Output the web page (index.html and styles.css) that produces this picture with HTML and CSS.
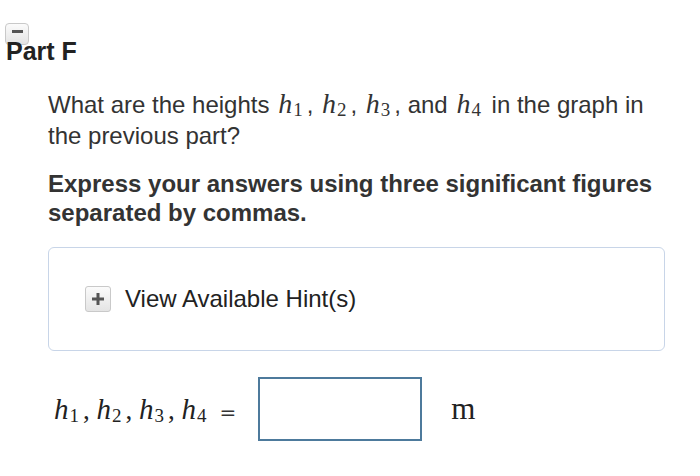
FILE: index.html
```html
<!DOCTYPE html>
<html>
<head>
<meta charset="utf-8">
<link rel="stylesheet" href="styles.css">
</head>
<body>
<div class="page">
  <div class="part-head">
    <span class="toggle minus"><span class="bar"></span></span>
    <h2 class="part-title">Part F</h2>
  </div>
  <div class="content">
    <p class="question">What are the heights <span class="m"><i>h</i><sub>1</sub></span>, <span class="m"><i>h</i><sub>2</sub></span>, <span class="m"><i>h</i><sub>3</sub></span>, and <span class="m"><i>h</i><sub>4</sub></span> in the graph in the previous part?</p>
    <p class="instr">Express your answers using three significant figures separated by commas.</p>
    <div class="hint-box">
      <span class="toggle plus"><svg width="12" height="12" viewBox="0 0 12 12"><rect x="4.5" y="0" width="3" height="12" fill="#555"/><rect x="0" y="4.5" width="12" height="3" fill="#555"/></svg></span>
      <span class="hint-text">View Available Hint(s)</span>
    </div>
    <div class="answer-row">
      <span class="eq"><span class="em"><i>h</i><sub>1</sub></span>, <span class="em"><i>h</i><sub>2</sub></span>, <span class="em"><i>h</i><sub>3</sub></span>, <span class="em"><i>h</i><sub>4</sub></span><span class="equals">=</span></span>
      <span class="input"></span>
      <span class="unit">m</span>
    </div>
  </div>
</div>
</body>
</html>
```

FILE: styles.css
```css
html, body {
  margin: 0;
  padding: 0;
  background: #fff;
}
.page {
  width: 700px;
  height: 476px;
  font-family: "Liberation Sans", Arial, sans-serif;
  color: #333;
  overflow: hidden;
}
.part-head {
  position: relative;
  padding: 38px 0 0 6px;
}
.toggle {
  display: flex;
  align-items: center;
  justify-content: center;
  box-sizing: border-box;
  border: 1px solid #c9c9c9;
  border-radius: 4px;
  background: linear-gradient(#fbfbfb, #e4e4e4);
}
.minus {
  position: absolute;
  left: 5px;
  top: 23px;
  width: 24px;
  height: 22px;
}
.minus .bar {
  display: block;
  width: 11px;
  height: 3px;
  background: #555;
  margin-top: -6px;
}
.part-title {
  position: relative;
  margin: 0;
  font-size: 25px;
  font-weight: bold;
  color: #222;
  line-height: 26px;
}
.content {
  padding: 0 0 0 48px;
  width: 620px;
}
.question {
  margin: 24px 0 0 0;
  font-size: 24px;
  line-height: 31px;
  width: 610px;
}
.m {
  margin-left: 2px;
  margin-right: 4px;
}
i {
  font-family: "Liberation Serif", serif;
  font-style: italic;
  font-size: 28px;
}
sub {
  font-family: "Liberation Serif", serif;
  font-size: 19px;
  vertical-align: -3px;
  line-height: 0;
  margin-left: 1px;
}
.instr {
  margin: 18px 0 0 0;
  font-size: 24px;
  font-weight: bold;
  line-height: 29px;
  color: #333;
}
.hint-box {
  margin-top: 20px;
  box-sizing: border-box;
  width: 617px;
  height: 104px;
  border: 1.5px solid #c8d5e8;
  border-radius: 6px;
  display: flex;
  align-items: center;
  padding-left: 36px;
}
.plus {
  width: 26px;
  height: 26px;
  border-radius: 3px;
}
.hint-text {
  margin-left: 14px;
  font-size: 24px;
  color: #222;
}
.answer-row {
  display: flex;
  align-items: center;
  margin-top: 26px;
  padding-left: 6px;
}
.eq {
  font-family: "Liberation Serif", serif;
  font-size: 27px;
  color: #222;
  white-space: nowrap;
}
.eq i {
  font-size: 29px;
}
.em {
  margin-right: 4px;
}
.equals {
  margin-left: 9px;
  font-family: "DejaVu Sans", sans-serif;
  font-size: 20px;
  color: #333;
}
.input {
  display: block;
  box-sizing: border-box;
  width: 164px;
  height: 64px;
  border: 2px solid #4d7a9c;
  margin-left: 22px;
}
.unit {
  margin-left: 29px;
  font-family: "Liberation Serif", serif;
  font-size: 31px;
  color: #222;
}
```
